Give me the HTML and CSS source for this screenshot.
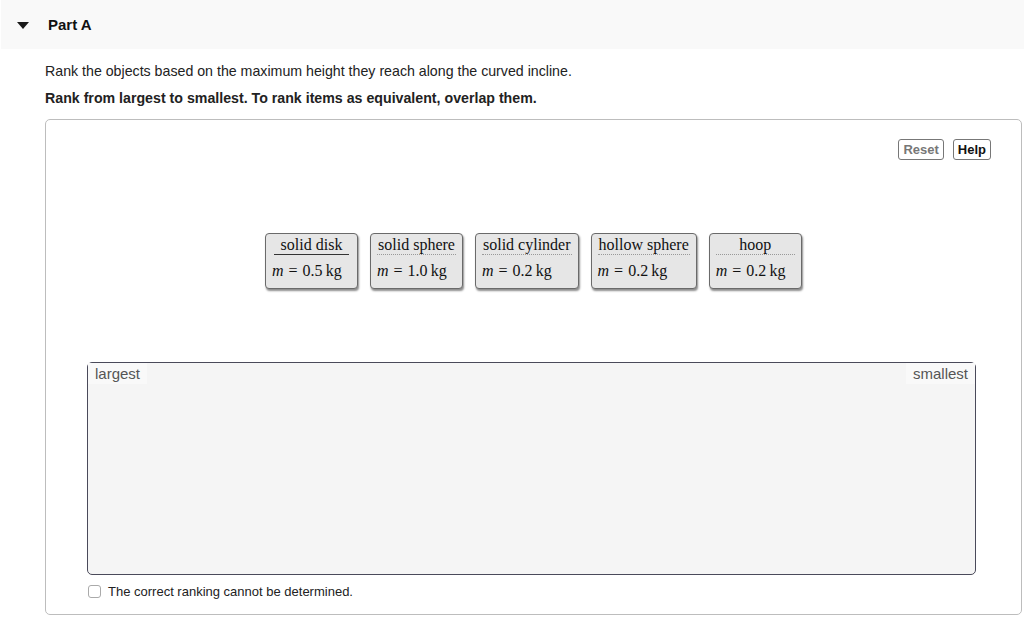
FILE: index.html
```html
<!DOCTYPE html>
<html lang="en">
<head>
  <meta charset="UTF-8" />
  <title>Part A</title>
  <link rel="stylesheet" href="styles.css">
</head>
<body>
  <div class="part-header">
    <span class="caret"></span>
    <span class="part-title">Part A</span>
  </div>

  <div class="part-body">
    <p class="prompt">Rank the objects based on the maximum height they reach along the curved incline.</p>
    <p class="prompt strong">Rank from largest to smallest. To rank items as equivalent, overlap them.</p>

    <div class="ranking">
      <div class="toolbar">
        <button class="tool-btn reset">Reset</button>
        <button class="tool-btn">Help</button>
      </div>

      <div class="items">
        <div class="item">
          <div class="item-name solid">solid disk</div>
          <div class="item-mass"><i>m</i><span class="eq">=</span>0.5&thinsp;kg</div>
        </div>
        <div class="item">
          <div class="item-name">solid sphere</div>
          <div class="item-mass"><i>m</i><span class="eq">=</span>1.0&thinsp;kg</div>
        </div>
        <div class="item">
          <div class="item-name">solid cylinder</div>
          <div class="item-mass"><i>m</i><span class="eq">=</span>0.2&thinsp;kg</div>
        </div>
        <div class="item">
          <div class="item-name">hollow sphere</div>
          <div class="item-mass"><i>m</i><span class="eq">=</span>0.2&thinsp;kg</div>
        </div>
        <div class="item">
          <div class="item-name">hoop</div>
          <div class="item-mass"><i>m</i><span class="eq">=</span>0.2&thinsp;kg</div>
        </div>
      </div>

      <div class="dropzone">
        <span class="zone-label">largest</span>
        <span class="zone-label">smallest</span>
      </div>

      <label class="undetermined">
        <span class="checkbox"></span>
        The correct ranking cannot be determined.
      </label>
    </div>
  </div>
</body>
</html>
```

FILE: styles.css
```css
body {
  margin: 0;
  font-family: "Liberation Sans", Arial, sans-serif;
  color: #222;
  background: #fff;
}

.part-header {
  display: flex;
  align-items: center;
  height: 49px;
  margin-left: 1px;
  padding-left: 16px;
  background: #f9f9f9;
}

.caret {
  width: 0;
  height: 0;
  border-left: 6px solid transparent;
  border-right: 6px solid transparent;
  border-top: 7px solid #1a1a1a;
  margin-top: 1px;
}

.part-title {
  margin-left: 19px;
  font-size: 15px;
  font-weight: bold;
  color: #111;
}

.part-body {
  padding: 14px 2px 0 45px;
}

.prompt {
  margin: 0 0 11px;
  font-size: 14.2px;
  line-height: 16px;
  color: #222;
}

.prompt.strong {
  font-weight: bold;
  margin-bottom: 13px;
}

.ranking {
  border: 1px solid #bdbdbd;
  border-radius: 5px;
  height: 496px;
  box-sizing: border-box;
  padding: 19px 45px 0 41px;
}

.toolbar {
  display: flex;
  justify-content: flex-end;
  gap: 9px;
  margin-right: -15px;
}

.tool-btn {
  font-family: "Liberation Sans", Arial, sans-serif;
  font-size: 13px;
  font-weight: bold;
  height: 21px;
  padding: 0 4px;
  background: #fff;
  border: 1px solid #777;
  border-radius: 3px;
  color: #111;
}

.tool-btn.reset {
  color: #777;
}

.items {
  display: flex;
  gap: 12px;
  margin: 73px 0 0 178px;
}

.item {
  display: flex;
  flex-direction: column;
  align-items: stretch;
  min-width: 93px;
  height: 56px;
  box-sizing: border-box;
  padding: 2px 6px 0;
  background: #e6e6e6;
  border: 1px solid #6a6a6a;
  border-radius: 4px;
  box-shadow: 1px 2px 2px rgba(0, 0, 0, 0.45);
  font-family: "Liberation Serif", "Times New Roman", serif;
  font-size: 16px;
  color: #111;
}

.item-name {
  text-align: center;
  line-height: 18px;
  padding: 0 1px;
  border-bottom: 1px dotted #999;
}

.item-name.solid {
  border-bottom: 1px solid #333;
  margin: 0 2px;
}

.item-mass {
  margin-top: 7px;
  white-space: nowrap;
  font-size: 16px;
}

.eq {
  margin: 0 5px 0 5px;
}

.dropzone {
  display: flex;
  justify-content: space-between;
  align-items: flex-start;
  height: 213px;
  box-sizing: border-box;
  margin-top: 73px;
  background: #f5f5f5;
  border: 1px solid #4a4a5a;
  border-radius: 5px;
}

.zone-label {
  padding: 2px 7px;
  font-size: 15px;
  color: #555;
  background: #f9f9f9;
}

.undetermined {
  display: flex;
  align-items: center;
  gap: 7px;
  margin-top: 9px;
  padding-left: 1px;
  font-size: 13px;
  color: #222;
}

.checkbox {
  width: 11px;
  height: 11px;
  border: 1px solid #aaa;
  border-radius: 3px;
  background: #fff;
}
```
